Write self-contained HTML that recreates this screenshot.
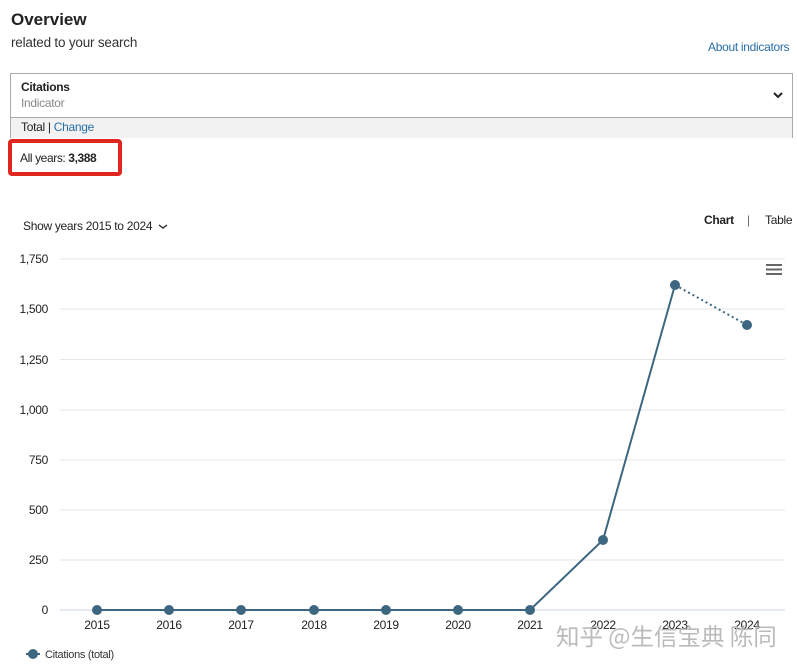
<!DOCTYPE html>
<html><head><meta charset="utf-8"><style>
body{margin:0;width:797px;height:671px;background:#fff;font-family:"Liberation Sans","Noto Sans CJK SC",sans-serif;position:relative;overflow:hidden;color:#222}
.a{position:absolute;white-space:nowrap}
</style></head><body>
<div class="a" style="left:11px;top:10px;font-size:17px;font-weight:bold;color:#222">Overview</div>
<div class="a" style="left:11px;top:35px;font-size:13.5px;color:#333;letter-spacing:-0.2px">related to your search</div>
<div class="a" style="left:708px;top:40px;font-size:12px;color:#2a6ea6;letter-spacing:-0.3px">About indicators</div>
<div class="a" style="left:10px;top:73px;width:783px;height:65px;border:1px solid #aaa;box-sizing:border-box"></div>
<div class="a" style="left:11px;top:117px;width:781px;height:20px;background:#f2f2f2;border-top:1px solid #aaa"></div>
<div class="a" style="left:21px;top:80px;font-size:12px;font-weight:bold;letter-spacing:-0.3px">Citations</div>
<div class="a" style="left:21px;top:96px;font-size:12px;color:#888;letter-spacing:-0.3px">Indicator</div>
<svg class="a" style="left:772px;top:91px" width="12" height="8"><path d="M2 2l4 4 4-4" stroke="#222" stroke-width="2" fill="none"/></svg>
<div class="a" style="left:21px;top:120px;font-size:12px;letter-spacing:-0.3px">Total | <span style="color:#2a6ea6">Change</span></div>
<div class="a" style="left:8px;top:139px;width:114px;height:37px;border:4px solid #e0261f;border-radius:4px;box-sizing:border-box"></div>
<div class="a" style="left:20px;top:151px;font-size:12px;letter-spacing:-0.4px">All years: <b>3,388</b></div>
<div class="a" style="left:23px;top:219px;font-size:12px;letter-spacing:-0.3px">Show years 2015 to 2024</div>
<svg class="a" style="left:158px;top:223px" width="10" height="7"><path d="M1 2l4 3 4-3" stroke="#222" stroke-width="1.3" fill="none"/></svg>
<div class="a" style="left:704px;top:213px;font-size:12px;font-weight:bold;letter-spacing:-0.3px">Chart</div>
<div class="a" style="left:747px;top:213px;font-size:12px;color:#666">|</div>
<div class="a" style="left:765px;top:213px;font-size:12px;letter-spacing:-0.3px">Table</div>
<svg class="a" style="left:0;top:240px" width="797" height="431" font-family="Liberation Sans" font-size="12" letter-spacing="-0.3">
<g stroke="#e6e6e6">
<line x1="60" x2="785" y1="19" y2="19"/><line x1="60" x2="785" y1="69" y2="69"/><line x1="60" x2="785" y1="119.5" y2="119.5"/><line x1="60" x2="785" y1="170" y2="170"/><line x1="60" x2="785" y1="220" y2="220"/><line x1="60" x2="785" y1="270" y2="270"/><line x1="60" x2="785" y1="320" y2="320"/></g>
<line x1="60" x2="785" y1="370" y2="370" stroke="#ccd6eb"/>
<g fill="#222" text-anchor="end"><text x="48" y="23">1,750</text><text x="48" y="73">1,500</text><text x="48" y="124">1,250</text><text x="48" y="174">1,000</text><text x="48" y="224">750</text><text x="48" y="274">500</text><text x="48" y="324">250</text><text x="48" y="374">0</text></g>
<g fill="#222" text-anchor="middle"><text x="97" y="389">2015</text><text x="169" y="389">2016</text><text x="241" y="389">2017</text><text x="314" y="389">2018</text><text x="386" y="389">2019</text><text x="458" y="389">2020</text><text x="530" y="389">2021</text><text x="603" y="389">2022</text><text x="675" y="389">2023</text><text x="747" y="389">2024</text></g>
<polyline points="97,370 169,370 241,370 314,370 386,370 458,370 530,370 603,300 675,45" fill="none" stroke="#3d6680" stroke-width="2"/>
<line x1="675" y1="45" x2="747" y2="85" stroke="#3d6680" stroke-width="2" stroke-dasharray="2,3"/>
<g fill="#3d6680"><circle cx="97" cy="370" r="5"/><circle cx="169" cy="370" r="5"/><circle cx="241" cy="370" r="5"/><circle cx="314" cy="370" r="5"/><circle cx="386" cy="370" r="5"/><circle cx="458" cy="370" r="5"/><circle cx="530" cy="370" r="5"/><circle cx="603" cy="300" r="5"/><circle cx="675" cy="45" r="5"/><circle cx="747" cy="85" r="5"/></g>
<g stroke="#666" stroke-width="2"><line x1="766" y1="25" x2="782" y2="25"/><line x1="766" y1="29.5" x2="782" y2="29.5"/><line x1="766" y1="34" x2="782" y2="34"/></g>
<line x1="26" x2="40" y1="414" y2="414" stroke="#3d6680" stroke-width="2"/><circle cx="33" cy="414" r="5" fill="#3d6680"/>
<text x="45" y="418" font-size="11" fill="#333">Citations (total)</text>
<text x="556" y="405" font-size="23.5" fill="#bbb" font-family="Noto Sans CJK SC" letter-spacing="0">知乎 @生信宝典 陈同</text>
</svg>
</body></html>
